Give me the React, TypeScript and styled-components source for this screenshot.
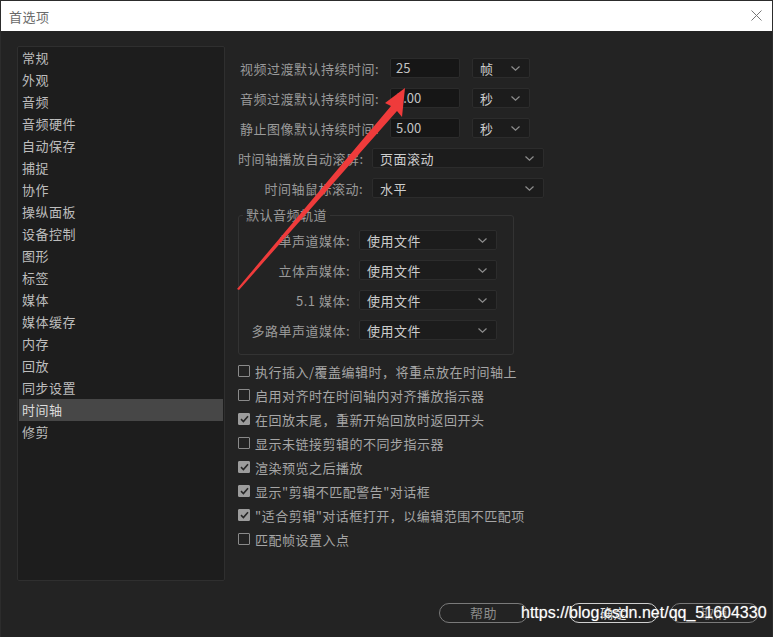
import styled, { createGlobalStyle } from "styled-components";

const GlobalStyle = createGlobalStyle`
  html, body {
    margin: 0;
    padding: 0;
    background: #232323;
  }
  body {
    font-family: "Noto Sans CJK SC", "Noto Sans", sans-serif;
    font-size: 13px;
    letter-spacing: 0.5px;
  }
`;

const Window = styled.div`
  position: relative;
  width: 773px;
  height: 637px;
  box-sizing: border-box;
  display: flex;
  flex-direction: column;
  background: #232323;
  border: 1px solid #2c2c2c;
  border-bottom: none;
  overflow: hidden;
`;

const TitleBar = styled.div`
  height: 30px;
  flex: none;
  display: flex;
  align-items: center;
  justify-content: space-between;
  padding: 0 10px 0 8px;
  background: #ffffff;
  color: #6a6a6a;
  font-size: 13px;
`;

const CloseButton = styled.svg`
  width: 11px;
  height: 11px;
  margin-top: -1px;
`;

const Body = styled.div`
  display: flex;
  gap: 13px;
  padding: 15px 0 0 16px;
  flex: none;
`;

const Sidebar = styled.ul`
  list-style: none;
  margin: 0;
  padding: 0 1px;
  width: 208px;
  height: 535px;
  box-sizing: border-box;
  background: #1d1d1d;
  border: 1px solid #2f2f2f;
  border-radius: 2px;
`;

const NavItem = styled.li<{ $active?: boolean }>`
  height: 22px;
  line-height: 21px;
  padding-left: 3px;
  color: ${(p) => (p.$active ? "#dcdcdc" : "#bdbdbd")};
  background: ${(p) => (p.$active ? "#474747" : "transparent")};
`;

const Content = styled.div`
  display: flex;
  flex-direction: column;
  gap: 10px;
  padding-top: 12px;
`;

const Row = styled.div`
  display: flex;
  align-items: center;
  height: 20px;
`;

const Label = styled.span<{ $width: number; $gap?: number }>`
  width: ${(p) => p.$width}px;
  margin-right: ${(p) => p.$gap ?? 7}px;
  text-align: right;
  color: #9a9a9a;
  white-space: nowrap;
`;

const NumberBox = styled.div`
  width: 70px;
  height: 20px;
  box-sizing: border-box;
  padding-left: 5px;
  line-height: 18px;
  background: #161616;
  border: 1px solid #2b2b2b;
  border-radius: 2px;
  color: #c4c4c4;
  letter-spacing: 0;
  margin-right: 12px;
`;

const Select = styled.div<{ $width: number }>`
  width: ${(p) => p.$width}px;
  height: 20px;
  box-sizing: border-box;
  display: flex;
  align-items: center;
  justify-content: space-between;
  padding: 0 9px 0 7px;
  background: #1c1c1c;
  border: 1px solid #2c2c2c;
  border-radius: 2px;
  color: #cdcdcd;
`;

const Chevron = () => (
  <svg width="9" height="5" viewBox="0 0 9 5">
    <path d="M0.5 0.5 L4.5 4.2 L8.5 0.5" fill="none" stroke="#8e8e8e" strokeWidth="1.2" />
  </svg>
);

const Group = styled.fieldset`
  margin: -1px 0 0 0;
  padding: 7px 0 14px 0;
  width: 276px;
  box-sizing: border-box;
  border: 1px solid #333333;
  border-radius: 3px;
  display: flex;
  flex-direction: column;
  gap: 10px;
`;

const Legend = styled.legend`
  margin-left: 4px;
  padding: 0 3px;
  line-height: 16px;
  color: #9a9a9a;
`;

const Checks = styled.div`
  display: flex;
  flex-direction: column;
  margin-top: -6px;
`;

const CheckRow = styled.div`
  display: flex;
  align-items: center;
  height: 24px;
  color: #a6a6a6;
`;

const Box = styled.span<{ $checked?: boolean }>`
  width: 12px;
  height: 12px;
  box-sizing: border-box;
  margin-right: 5px;
  border: 1.5px solid ${(p) => (p.$checked ? "#9c9c9c" : "#8a8a8a")};
  background: ${(p) => (p.$checked ? "#9c9c9c" : "transparent")};
  border-radius: 1px;
  display: flex;
  align-items: center;
  justify-content: center;
`;

const Footer = styled.div`
  display: flex;
  justify-content: flex-end;
  padding: 22px 13px 0 0;
`;

const Button = styled.button<{ $primary?: boolean; $gap: number }>`
  height: 20px;
  width: 89px;
  margin-left: ${(p) => p.$gap}px;
  padding: 0;
  border-radius: 10px;
  background: transparent;
  border: 1.5px solid ${(p) => (p.$primary ? "#cfcfcf" : "#7a7a7a")};
  color: ${(p) => (p.$primary ? "#e2e2e2" : "#8c8c8c")};
  font-family: inherit;
  font-size: 13px;
  letter-spacing: 0.5px;
  line-height: 16px;
`;

const Watermark = styled.div`
  position: absolute;
  left: 520px;
  top: 603px;
  font-family: "Liberation Sans", Arial, sans-serif;
  font-size: 16px;
  letter-spacing: 0;
  color: #ffffff;
  text-shadow: 0 0 1px #6a6a6a, 0 0 1px #6a6a6a;
  pointer-events: none;
`;

const Overlay = styled.svg`
  position: absolute;
  left: 0;
  top: 0;
  pointer-events: none;
`;

const navItems = [
  "常规", "外观", "音频", "音频硬件", "自动保存", "捕捉", "协作", "操纵面板",
  "设备控制", "图形", "标签", "媒体", "媒体缓存", "内存", "回放", "同步设置",
  "时间轴", "修剪",
];

const durations = [
  { label: "视频过渡默认持续时间:", value: "25", unit: "帧" },
  { label: "音频过渡默认持续时间:", value: "1.00", unit: "秒" },
  { label: "静止图像默认持续时间:", value: "5.00", unit: "秒" },
];

const tracks = ["单声道媒体:", "立体声媒体:", "5.1 媒体:", "多路单声道媒体:"];

const options = [
  { text: "执行插入/覆盖编辑时，将重点放在时间轴上", checked: false },
  { text: "启用对齐时在时间轴内对齐播放指示器", checked: false },
  { text: "在回放末尾，重新开始回放时返回开头", checked: true },
  { text: "显示未链接剪辑的不同步指示器", checked: false },
  { text: "渲染预览之后播放", checked: true },
  { text: "显示\"剪辑不匹配警告\"对话框", checked: true },
  { text: "\"适合剪辑\"对话框打开，以编辑范围不匹配项", checked: true },
  { text: "匹配帧设置入点", checked: false },
];

export default function App() {
  return (
    <>
      <GlobalStyle />
      <Window>
        <TitleBar>
          <span>首选项</span>
          <CloseButton viewBox="0 0 11 11">
            <path d="M0.5 0.5 L10.5 10.5 M10.5 0.5 L0.5 10.5" stroke="#777" strokeWidth="1" />
          </CloseButton>
        </TitleBar>
        <Body>
          <Sidebar>
            {navItems.map((item) => (
              <NavItem key={item} $active={item === "时间轴"}>
                {item}
              </NavItem>
            ))}
          </Sidebar>
          <Content>
            {durations.map((d) => (
              <Row key={d.label}>
                <Label $width={141} $gap={11}>{d.label}</Label>
                <NumberBox>{d.value}</NumberBox>
                <Select $width={58}>
                  {d.unit}
                  <Chevron />
                </Select>
              </Row>
            ))}
            <Row>
              <Label $width={125} $gap={9}>时间轴播放自动滚屏:</Label>
              <Select $width={172}>
                页面滚动
                <Chevron />
              </Select>
            </Row>
            <Row>
              <Label $width={125} $gap={9}>时间轴鼠标滚动:</Label>
              <Select $width={172}>
                水平
                <Chevron />
              </Select>
            </Row>
            <Group>
              <Legend>默认音频轨道</Legend>
              {tracks.map((t) => (
                <Row key={t}>
                  <Label $width={111} $gap={9}>{t}</Label>
                  <Select $width={138}>
                    使用文件
                    <Chevron />
                  </Select>
                </Row>
              ))}
            </Group>
            <Checks>
              {options.map((o) => (
                <CheckRow key={o.text}>
                  <Box $checked={o.checked}>
                    {o.checked && (
                      <svg width="9" height="8" viewBox="0 0 9 8">
                        <path d="M1 4.2 L3.4 6.5 L8 1.2" fill="none" stroke="#262626" strokeWidth="1.6" />
                      </svg>
                    )}
                  </Box>
                  {o.text}
                </CheckRow>
              ))}
            </Checks>
          </Content>
        </Body>
        <Footer>
          <Button $gap={0}>帮助</Button>
          <Button $gap={41} $primary>确定</Button>
          <Button $gap={12}>取消</Button>
        </Footer>
        <Watermark>https://blog.csdn.net/qq_51604330</Watermark>
        <Overlay width="773" height="637" viewBox="0 0 773 637">
          <polygon
            points="404,87 384,102 390,105 236,288 238,289 396,110 401,116"
            fill="#ef3b3b"
          />
        </Overlay>
      </Window>
    </>
  );
}
